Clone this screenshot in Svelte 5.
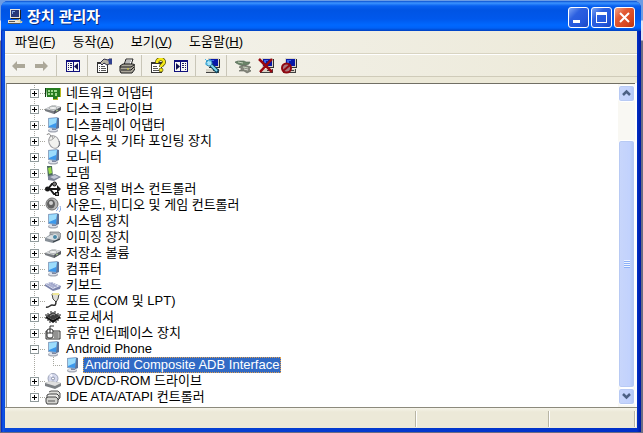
<script lang="ts">
	type Device = {
		name: string;
		icon: string;
		children?: { name: string; icon: string }[];
	};

	const menus = [
		{ label: "파일", key: "F" },
		{ label: "동작", key: "A" },
		{ label: "보기", key: "V" },
		{ label: "도움말", key: "H" },
	];

	const toolGroups = [
		[
			{ icon: "back", label: "뒤로", disabled: true },
			{ icon: "forward", label: "앞으로", disabled: true },
		],
		[{ icon: "tree-pane", label: "콘솔 트리 표시/숨기기" }],
		[
			{ icon: "properties", label: "속성" },
			{ icon: "print", label: "인쇄" },
		],
		[
			{ icon: "help", label: "도움말" },
			{ icon: "action-pane", label: "작업 창 표시/숨기기" },
		],
		[{ icon: "scan", label: "하드웨어 변경 사항 검색" }],
		[
			{ icon: "update", label: "드라이버 업데이트" },
			{ icon: "uninstall", label: "제거" },
			{ icon: "disable", label: "사용 안 함" },
		],
	];

	const devices: Device[] = [
		{ name: "네트워크 어댑터", icon: "network" },
		{ name: "디스크 드라이브", icon: "disk" },
		{ name: "디스플레이 어댑터", icon: "monitor" },
		{ name: "마우스 및 기타 포인팅 장치", icon: "mouse" },
		{ name: "모니터", icon: "monitor" },
		{ name: "모뎀", icon: "modem" },
		{ name: "범용 직렬 버스 컨트롤러", icon: "usb" },
		{ name: "사운드, 비디오 및 게임 컨트롤러", icon: "sound" },
		{ name: "시스템 장치", icon: "monitor" },
		{ name: "이미징 장치", icon: "camera" },
		{ name: "저장소 볼륨", icon: "disk" },
		{ name: "컴퓨터", icon: "monitor" },
		{ name: "키보드", icon: "keyboard" },
		{ name: "포트 (COM 및 LPT)", icon: "port" },
		{ name: "프로세서", icon: "cpu" },
		{ name: "휴먼 인터페이스 장치", icon: "hid" },
		{
			name: "Android Phone",
			icon: "monitor",
			children: [{ name: "Android Composite ADB Interface", icon: "monitor" }],
		},
		{ name: "DVD/CD-ROM 드라이브", icon: "cdrom" },
		{ name: "IDE ATA/ATAPI 컨트롤러", icon: "ide" },
	];

	let expanded = $state<Record<string, boolean>>({ "Android Phone": true });
	let selected = $state("Android Composite ADB Interface");

	function toggle(name: string) {
		expanded[name] = !expanded[name];
	}
</script>

{#snippet pc()}
	<path d="M4 0h11v9H4z" fill="#d8d4c8" />
	<path d="M5 1h9v7H5z" fill="#0818a8" />
	<path d="M6 2h4v1H6zM6 3h2v2H6z" fill="#3c68e8" />
	<path d="M15 1h1v9H5V9h10z" fill="#303030" />
	<path d="M2 11h12v3H2z" fill="#d8d4c8" />
	<path d="M2 14h13v1H2zM14 11h1v3h-1zM9 12h4v1H9z" fill="#404040" />
{/snippet}

{#snippet icon(name: string)}
	<svg class="icon" viewBox="0 0 16 16" aria-hidden="true">
		{#if name === "app"}
			<g shape-rendering="crispEdges">
				<path d="M3 0h10v9H3z" fill="#e8e4d8" />
				<path d="M4 1h8v7H4z" fill="#283878" />
				<path d="M5 2h3v1H5zM5 3h1v2H5z" fill="#80a8e0" />
				<path d="M13 1h1v9H4V9h9z" fill="#202020" />
				<path d="M1 11h12v3H1z" fill="#e8e4d8" />
				<path d="M2 12h6v1H2zM1 14h12v1H1z" fill="#555" />
			</g>
			<path d="M10 11l4 3 1-2M12 10l3 4" stroke="#e8d890" fill="none" />
		{:else if name === "back"}
			<path d="M1 8l5-5v3h8v4H6v3z" fill="#aca899" />
		{:else if name === "forward"}
			<path d="M14 8L9 3v3H1v4h8v3z" fill="#aca899" />
		{:else if name === "tree-pane" || name === "action-pane"}
			<g shape-rendering="crispEdges" transform={name === "action-pane" ? "translate(16 0) scale(-1 1)" : undefined}>
				<path d="M1 2h14v12H1z" fill="#10107c" />
				<path d="M2 4h6v9H2zM9 4h5v9H9z" fill="#f8f8f4" />
				<path d="M3 5h1v1H3zM5 5h2v1H5zM3 7h1v1H3zM5 7h2v1H5zM3 9h1v1H3zM5 9h2v1H5zM3 11h1v1H3z" fill="#202060" />
			</g>
			<path d={name === "action-pane" ? "M3 5v7l4-3.500z" : "M13 5v7L9 8.500z"} fill="#101050" />
		{:else if name === "properties"}
			<g shape-rendering="crispEdges">
				<path d="M1 4h11v11H1z" fill="#333" />
				<path d="M2 6h9v8H2z" fill="#fff" />
				<path d="M3 8h1v1H3zM5 8h4v1H5zM3 10h1v1H3zM5 10h5v1H5zM3 12h1v1H3zM5 12h5v1H5z" fill="#555" />
			</g>
			<path d="M4 5l4-4 4 1 1-1h3v5h-3l-2 1-3-2-2 2z" fill="#b8b4a4" stroke="#303048" />
			<path d="M12 1h4v5h-3z" fill="#304090" />
		{:else if name === "print"}
			<path d="M5 7l2-6h7l-2 6z" fill="#fff" stroke="#222" />
			<path d="M7 3h5M6 5h5" stroke="#777" />
			<path d="M1 8l3-2h10l2 1v4l-3 4H2l-1-2z" fill="#aaa69a" stroke="#1c1c1c" />
			<path d="M1 9h11l3-2M2 12h10l3-3" stroke="#1c1c1c" fill="none" />
			<path d="M8 11h2" stroke="#e0d830" />
		{:else if name === "help"}
			<g shape-rendering="crispEdges">
				<path d="M1 4h11v11H1z" fill="#333" />
				<path d="M2 6h9v8H2z" fill="#fff" />
				<path d="M3 8h4v1H3zM3 10h5v1H3zM3 12h6v1H3z" fill="#555" />
			</g>
			<path d="M7 5c0-5 7-5 7-1 0 3-3 2-3 5" fill="none" stroke="#4c4808" stroke-width="4" />
			<path d="M7 5c0-5 7-5 7-1 0 3-3 2-3 5" fill="none" stroke="#f4e818" stroke-width="2.500" />
			<circle cx="11" cy="12" r="2" fill="#f4e818" stroke="#4c4808" stroke-width=".7" />
		{:else if name === "scan"}
			{@render pc()}
			<path d="M7 7l7 7" stroke="#104860" stroke-width="4" />
			<path d="M7 7l6 6" stroke="#80d8f0" stroke-width="2" />
			<circle cx="5" cy="5" r="3" fill="#a8e4f8" stroke="#3890b8" />
			<path d="M1 1l3 3M1 6h3M6 1v3" stroke="#48b8e8" />
		{:else if name === "update"}
			<path d="M0 4l3-1h6l2 1h4l-1 2-5 2-4-1-4-2z" fill="#6b8468" stroke="#4e6350" stroke-width=".6" />
			<path d="M4 9l5-2 7 2-2 2 2 2-4 2-3-2-5 0 3-2z" fill="#85887c" stroke="#5c6058" stroke-width=".6" />
			<path d="M3 4l5 1M8 9l5 1" stroke="#c3d0bb" />
			<path d="M9 11l4 1" stroke="#dcdcd4" />
		{:else if name === "uninstall"}
			{@render pc()}
			<path d="M1 1l13 13M14 1L2 14" stroke="#980810" stroke-width="2.500" fill="none" />
		{:else if name === "disable"}
			{@render pc()}
			<circle cx="5.500" cy="10" r="4.500" fill="#a87880" stroke="#900810" stroke-width="2" />
			<path d="M2 13l7-6" stroke="#900810" stroke-width="2" />
		{:else if name === "network"}
			<path d="M1 3h14v9h-3v2H8v-2H2z" fill="#267c20" />
			<path d="M15 3h1v9h-3v3H8v-1h4v-2h3z" fill="#b8b820" />
			<path d="M3 5h2v2H3zM6 5h2v2H6zM9 5h3v2H9zM3 8h2v2H3zM6 8h2v2H6zM10 8h2v3h-2z" fill="#a0d890" />
			<path d="M0 3h1v9H0z" fill="#103c14" />
		{:else if name === "disk"}
			<path d="M0 8l8-4 8 2v3l-7 4-9-3z" fill="#777b80" />
			<path d="M0 8l8-4 8 2-7 4z" fill="#d6d8da" />
			<ellipse cx="8" cy="7" rx="4" ry="1.500" fill="#f4f5f5" stroke="#8c9090" stroke-width=".6" />
			<path d="M9 10l7-4v3l-7 4z" fill="#585c62" />
			<path d="M11 10l2-1" stroke="#b8dc90" />
		{:else if name === "monitor"}
			<ellipse cx="8" cy="13.500" rx="5" ry="2" fill="#a4a8b4" />
			<ellipse cx="8" cy="13" rx="4" ry="1.200" fill="#dfe2ea" />
			<path d="M7 10h4v3H7z" fill="#7c86a0" />
			<path d="M3 1l9-1 2 1v10l-3 1-8-1z" fill="#8ea6c4" />
			<path d="M12 1h2v10l-3 1z" fill="#5c7298" />
			<path d="M4 2l8-1-1 10-7-1z" fill="#3c98ec" />
			<path d="M4 2l8-1-1 5-7 3z" fill="#9cdcfc" />
		{:else if name === "mouse"}
			<path d="M2 2c1-3 5 0 4 3" stroke="#777" fill="none" />
			<ellipse cx="9" cy="9" rx="5" ry="6.500" transform="rotate(-24 9 9)" fill="#f2f2ef" stroke="#9c9ca0" />
			<path d="M4 7c2 1 5-1 6-4M7 2l1 4" fill="none" stroke="#a4a4a4" />
			<path d="M13 14c2-1 2-4 1-6" fill="none" stroke="#70747c" />
		{:else if name === "modem"}
			<path d="M2 1l5 0 1 11-5 1z" fill="#48685c" />
			<path d="M3 3l3-1 1 6-3 1z" fill="#9adc48" />
			<path d="M3 11l7-2 6 3-7 4-6-1z" fill="#7c8498" />
			<path d="M5 12l5-2 4 2-5 2z" fill="#c4c8d8" />
		{:else if name === "usb"}
			<path d="M2 8h12M3 8l4-5h3M5 8l4 5h3" fill="none" stroke="#181818" stroke-width="2" />
			<circle cx="2.500" cy="8" r="2.500" fill="#181818" />
			<circle cx="9.500" cy="3" r="2" fill="#777" stroke="#181818" />
			<path d="M10 11h4v4h-4zM12 4l4 4-4 4z" fill="#181818" />
			<path d="M11 12h2v2h-2z" fill="#999" />
		{:else if name === "sound"}
			<ellipse cx="7" cy="7" rx="6" ry="6" fill="#b8b8b8" stroke="#707070" />
			<ellipse cx="6" cy="7" rx="4" ry="4.500" fill="#606060" />
			<circle cx="6" cy="6" r="2" fill="#d0d0d0" />
			<path d="M11 14c2-1 2-3 2-4M14 15c2-2 2-4 1-6" fill="none" stroke="#88a8e0" />
		{:else if name === "camera"}
			<path d="M5 3l9 0 2 2-1 5-10 0z" fill="#b0b4b8" stroke="#73777c" stroke-width=".7" />
			<path d="M0 9l6-4 9 3v3l-7 3-8-2z" fill="#889098" />
			<path d="M1 9l5-3 8 2-6 3z" fill="#dce0e4" />
			<circle cx="10" cy="8" r="2.500" fill="#4888a8" stroke="#e8e8e8" />
			<path d="M8 13l7-3" stroke="#303840" />
		{:else if name === "keyboard"}
			<path d="M0 7l6-2 10 4-1 3-7 2-8-5z" fill="#7c84ac" />
			<path d="M0 7l6-2 9 4-7 3z" fill="#dcdff0" />
			<path d="M2 7l7 4M4 6l7 4M6 6l6 4M3 8l5-2M5 9l5-2M7 10l5-2" stroke="#9098c0" stroke-width=".7" />
		{:else if name === "port"}
			<path d="M7 1h7l-1 5-2 3-3-3z" fill="#deddd8" stroke="#4c4c48" />
			<path d="M8 0h6v2H7z" fill="#f0e898" />
			<path d="M11 8c0 6-2 4-4 4s-3 3-6 2" fill="none" stroke="#303030" stroke-width="1.500" />
		{:else if name === "cpu"}
			<path d="M1 7l7-4 7 4-7 4z" fill="#3c3c3c" />
			<path d="M1 7l7 4 7-4v2l-7 5-7-5z" fill="#141414" />
			<path d="M3 4v2M6 2v2M10 2v2M13 4v2M0 6h2M14 6h2M0 9h2M14 9h2M3 10v2M5 12v2M11 12v2M13 10v2" stroke="#181818" />
			<path d="M5 7l3-2 2 1" stroke="#989898" fill="none" />
		{:else if name === "hid"}
			<path d="M1 6h14v8H1z" fill="#e8e8e4" stroke="#303030" />
			<path d="M9 8h5M9 10h5M9 12h5M10 7v6M12 7v6" stroke="#777" />
			<rect x="2" y="4" width="6" height="9" rx="2" fill="#fff" stroke="#303030" />
			<path d="M2 8h6M5 4v4M5 4V1h4" stroke="#303030" fill="none" />
		{:else if name === "cdrom"}
			<circle cx="8" cy="5.500" r="5" fill="#d4d8ec" stroke="#8088a0" stroke-width=".7" />
			<path d="M8 5L4 2 7 1z" fill="#f8f8ff" />
			<circle cx="8" cy="5.500" r="1.500" fill="#fff" stroke="#8890a8" />
			<path d="M0 10l5-2 11 2v3l-6 3-10-3z" fill="#7c8084" />
			<path d="M0 10l5-2 11 2-6 3z" fill="#e0e0e0" />
		{:else if name === "ide"}
			<path d="M4 3l2-1h7l2 2v5l-3 2" fill="#dcdcd8" stroke="#555" />
			<path d="M2 6l2-1h8l2 2v3l-2 2H2z" fill="#ededea" stroke="#444" />
			<path d="M1 9l2-1h8l2 2v3l-1 2H2l-1-2z" fill="#d2d2ce" stroke="#444" />
			<path d="M3 12h7" stroke="#555" />
		{/if}
	</svg>
{/snippet}

<div class="desktop">
	<main class="window">
		<header class="titlebar">
			{@render icon("app")}
			<h1>장치 관리자</h1>
			<div class="controls">
				<button aria-label="최소화">
					<svg viewBox="0 0 19 19"><path d="M4 12h7v3H4z" fill="#fff" /></svg>
				</button>
				<button aria-label="최대화">
					<svg viewBox="0 0 19 19"><path d="M4 4h11v11H4zM5 7v7h9V7z" fill="#fff" fill-rule="evenodd" /></svg>
				</button>
				<button class="close" aria-label="닫기">
					<svg viewBox="0 0 19 19"><path d="M5 5l9 9M14 5l-9 9" stroke="#fff" stroke-width="2" /></svg>
				</button>
			</div>
		</header>

		<nav class="menubar">
			{#each menus as menu}
				<button>{menu.label}(<u>{menu.key}</u>)</button>
			{/each}
		</nav>

		<div class="toolbar" role="toolbar">
			{#each toolGroups as group}
				<div class="group">
					{#each group as tool}
						<button aria-label={tool.label} disabled={tool.disabled}>{@render icon(tool.icon)}</button>
					{/each}
				</div>
			{/each}
		</div>

		<section class="pane">
			<ul class="tree">
				{#each devices as device}
					<li>
						<div class="row">
							<button
								class="expander"
								class:open={expanded[device.name]}
								aria-label={device.name}
								onclick={() => toggle(device.name)}
							></button>
							{@render icon(device.icon)}
							<button
								class="name"
								class:selected={selected === device.name}
								onclick={() => (selected = device.name)}>{device.name}</button
							>
						</div>
						{#if device.children && expanded[device.name]}
							<ul class="branch">
								{#each device.children as child}
									<li class="row">
										{@render icon(child.icon)}
										<button
											class="name"
											class:selected={selected === child.name}
											onclick={() => (selected = child.name)}>{child.name}</button
										>
									</li>
								{/each}
							</ul>
						{/if}
					</li>
				{/each}
			</ul>

			<div class="scrollbar">
				<button aria-label="위로 스크롤">
					<svg viewBox="0 0 15 15"><path d="M4 9l3.500-3.500L11 9" fill="none" stroke="#4d6185" stroke-width="2.500" /></svg>
				</button>
				<div class="track"></div>
				<div class="thumb"><i></i></div>
				<button aria-label="아래로 스크롤">
					<svg viewBox="0 0 15 15"><path d="M4 5l3.500 3.500L11 5" fill="none" stroke="#4d6185" stroke-width="2.500" /></svg>
				</button>
			</div>
		</section>

		<footer class="statusbar">
			<span></span>
			<span></span>
			<span></span>
		</footer>
	</main>
</div>

<style>
	:global(body) {
		margin: 0;
	}

	.desktop {
		box-sizing: border-box;
		display: flex;
		min-height: 100vh;
		padding: 1px 2px 1px 1px;
		background: linear-gradient(#6c9ce4 0, #6c9ce4 20px, #e0e4f4 21px, #e0e4f4 40px, #6c6c84 41px);
		font-family: "Liberation Sans", "Noto Sans CJK KR", sans-serif;
		font-size: 13px;
		color: #000;
	}

	button {
		margin: 0;
		padding: 0;
		border: 0;
		background: none;
		font: inherit;
		color: inherit;
	}

	ul {
		margin: 0;
		padding: 0;
		list-style: none;
	}

	svg {
		display: block;
	}

	.icon {
		width: 16px;
		height: 16px;
		flex: none;
	}

	.window {
		display: flex;
		flex: 1;
		flex-direction: column;
		min-width: 0;
		padding: 0 4px 4px;
		border-radius: 7px 7px 0 0;
		background: linear-gradient(90deg, #0020b8 0, #1058e8 2px, #0848d8 4px, #0030c8 calc(100% - 4px), #0018a0 100%);
	}

	/* title bar */
	.titlebar {
		display: flex;
		align-items: center;
		gap: 4px;
		height: 30px;
		margin: 0 -4px;
		padding: 2px 6px 0;
		box-sizing: border-box;
		border-radius: 7px 7px 0 0;
		background: linear-gradient(#0a50d0 0, #3c94ff 2px, #0860f0 5px, #0054e4 9px, #0058ec 18px, #0068ff 24px, #0062f8 27px, #0040c0 30px);
	}

	h1 {
		flex: 1;
		margin: 0;
		font-size: 15px;
		line-height: 20px;
		font-weight: bold;
		color: #fff;
		text-shadow: 1px 1px #0a2a80;
	}

	.controls {
		display: flex;
		gap: 2px;
	}

	.controls button {
		box-sizing: border-box;
		width: 21px;
		height: 21px;
		border: 1px solid #fff;
		border-radius: 3px;
		background: linear-gradient(135deg, #7ca4f4, #2c60e0 35%, #2458dc 70%, #1c48c0);
	}

	.controls button.close {
		background: linear-gradient(135deg, #f0a488, #e25a34 35%, #d84820 70%, #b83410);
	}

	/* menu and tool bars */
	.menubar,
	.toolbar {
		display: flex;
		align-items: center;
		background: linear-gradient(90deg, #f5f4ef, #ece9d8);
	}

	.menubar {
		gap: 17px;
		height: 22px;
		padding: 0 10px;
		border-bottom: 1px solid #d8d4c2;
	}

	.menubar button {
		line-height: 20px;
	}

	.toolbar {
		height: 21px;
		padding: 0 2px;
		border-top: 1px solid #fff;
		border-bottom: 1px solid #cfcbb9;
	}

	.group {
		display: flex;
	}

	.group + .group {
		margin-left: 3px;
		padding-left: 4px;
		border-left: 1px solid #c9c6b8;
	}

	.toolbar button {
		display: grid;
		place-items: center;
		width: 23px;
		height: 21px;
	}

	/* device tree */
	.pane {
		display: flex;
		flex: 1;
		border-top: 6px solid #ece9d8;
		border-left: 1px solid #d4e0f0;
		background: #fff;
	}

	.tree {
		flex: 1;
		min-width: 0;
		padding: 1px 0 1px 23px;
		border-top: 1px solid #716f64;
		border-left: 1px solid #9d9b90;
	}

	.tree > li {
		background: repeating-linear-gradient(#a8a8a0 0 1px, transparent 1px 2px) 4px 0 / 1px 100% no-repeat;
	}

	.tree > li:last-child {
		background-size: 1px 8px;
	}

	.row {
		display: flex;
		align-items: center;
		height: 16px;
	}

	.expander {
		box-sizing: border-box;
		width: 9px;
		height: 9px;
		border: 1px solid #919b9c;
		background:
			linear-gradient(#000, #000) center / 5px 1px no-repeat,
			linear-gradient(#000, #000) center / 1px 5px no-repeat,
			#fff;
	}

	.expander.open {
		background: linear-gradient(#000, #000) center / 5px 1px no-repeat, #fff;
	}

	.expander + .icon {
		margin-left: 6px;
	}

	.tree > li > .row {
		background: repeating-linear-gradient(90deg, #a8a8a0 0 1px, transparent 1px 2px) 10px 8px / 5px 1px no-repeat;
	}

	.branch {
		padding-left: 23px;
	}

	.branch .row {
		padding-left: 11px;
		background:
			repeating-linear-gradient(#a8a8a0 0 1px, transparent 1px 2px) 0 0 / 1px 8px no-repeat,
			repeating-linear-gradient(90deg, #a8a8a0 0 1px, transparent 1px 2px) 0 8px / 10px 1px no-repeat;
	}

	.name {
		box-sizing: border-box;
		height: 16px;
		margin-left: 3px;
		padding: 0 1px;
		border: 1px solid transparent;
		line-height: 14px;
		white-space: nowrap;
	}

	.name.selected {
		border: 1px dotted #e0a050;
		background: #316ac5;
		color: #fff;
	}

	/* scroll bar */
	.scrollbar {
		display: flex;
		flex-direction: column;
		width: 17px;
		padding: 1px 0 2px;
		margin-right: 2px;
		border-top: 1px solid #716f64;
		background: #f9f8f3;
	}

	.scrollbar button,
	.thumb {
		box-sizing: border-box;
		border: 1px solid #fff;
		border-radius: 3px;
		background: linear-gradient(90deg, #c8d6fb, #c2d2fd 70%, #b0c4f4);
		box-shadow: inset 0 0 0 1px #b8caf4;
	}

	.scrollbar button {
		height: 17px;
		flex: none;
	}

	.track {
		flex: 38;
	}

	.thumb {
		display: grid;
		flex: 247;
		place-items: center;
	}

	.thumb i {
		width: 6px;
		height: 8px;
		background: repeating-linear-gradient(#eef4fe 0 1px, #8cb0f8 1px 2px);
	}

	/* status bar */
	.statusbar {
		display: flex;
		height: 20px;
		padding: 0 2px 0 0;
		border-top: 1px solid #8c8a7c;
		background: linear-gradient(#f6f4ea, #ece9d8 4px, #ece9d8);
	}

	.statusbar span {
		box-sizing: border-box;
		width: 86px;
		margin: 3px 0 1px;
		border-right: 1px solid #b8b5a4;
		box-shadow: 1px 0 #fff;
	}

	.statusbar span:first-child {
		flex: 1;
	}

	.statusbar span:nth-child(2) {
		width: 133px;
	}
</style>
